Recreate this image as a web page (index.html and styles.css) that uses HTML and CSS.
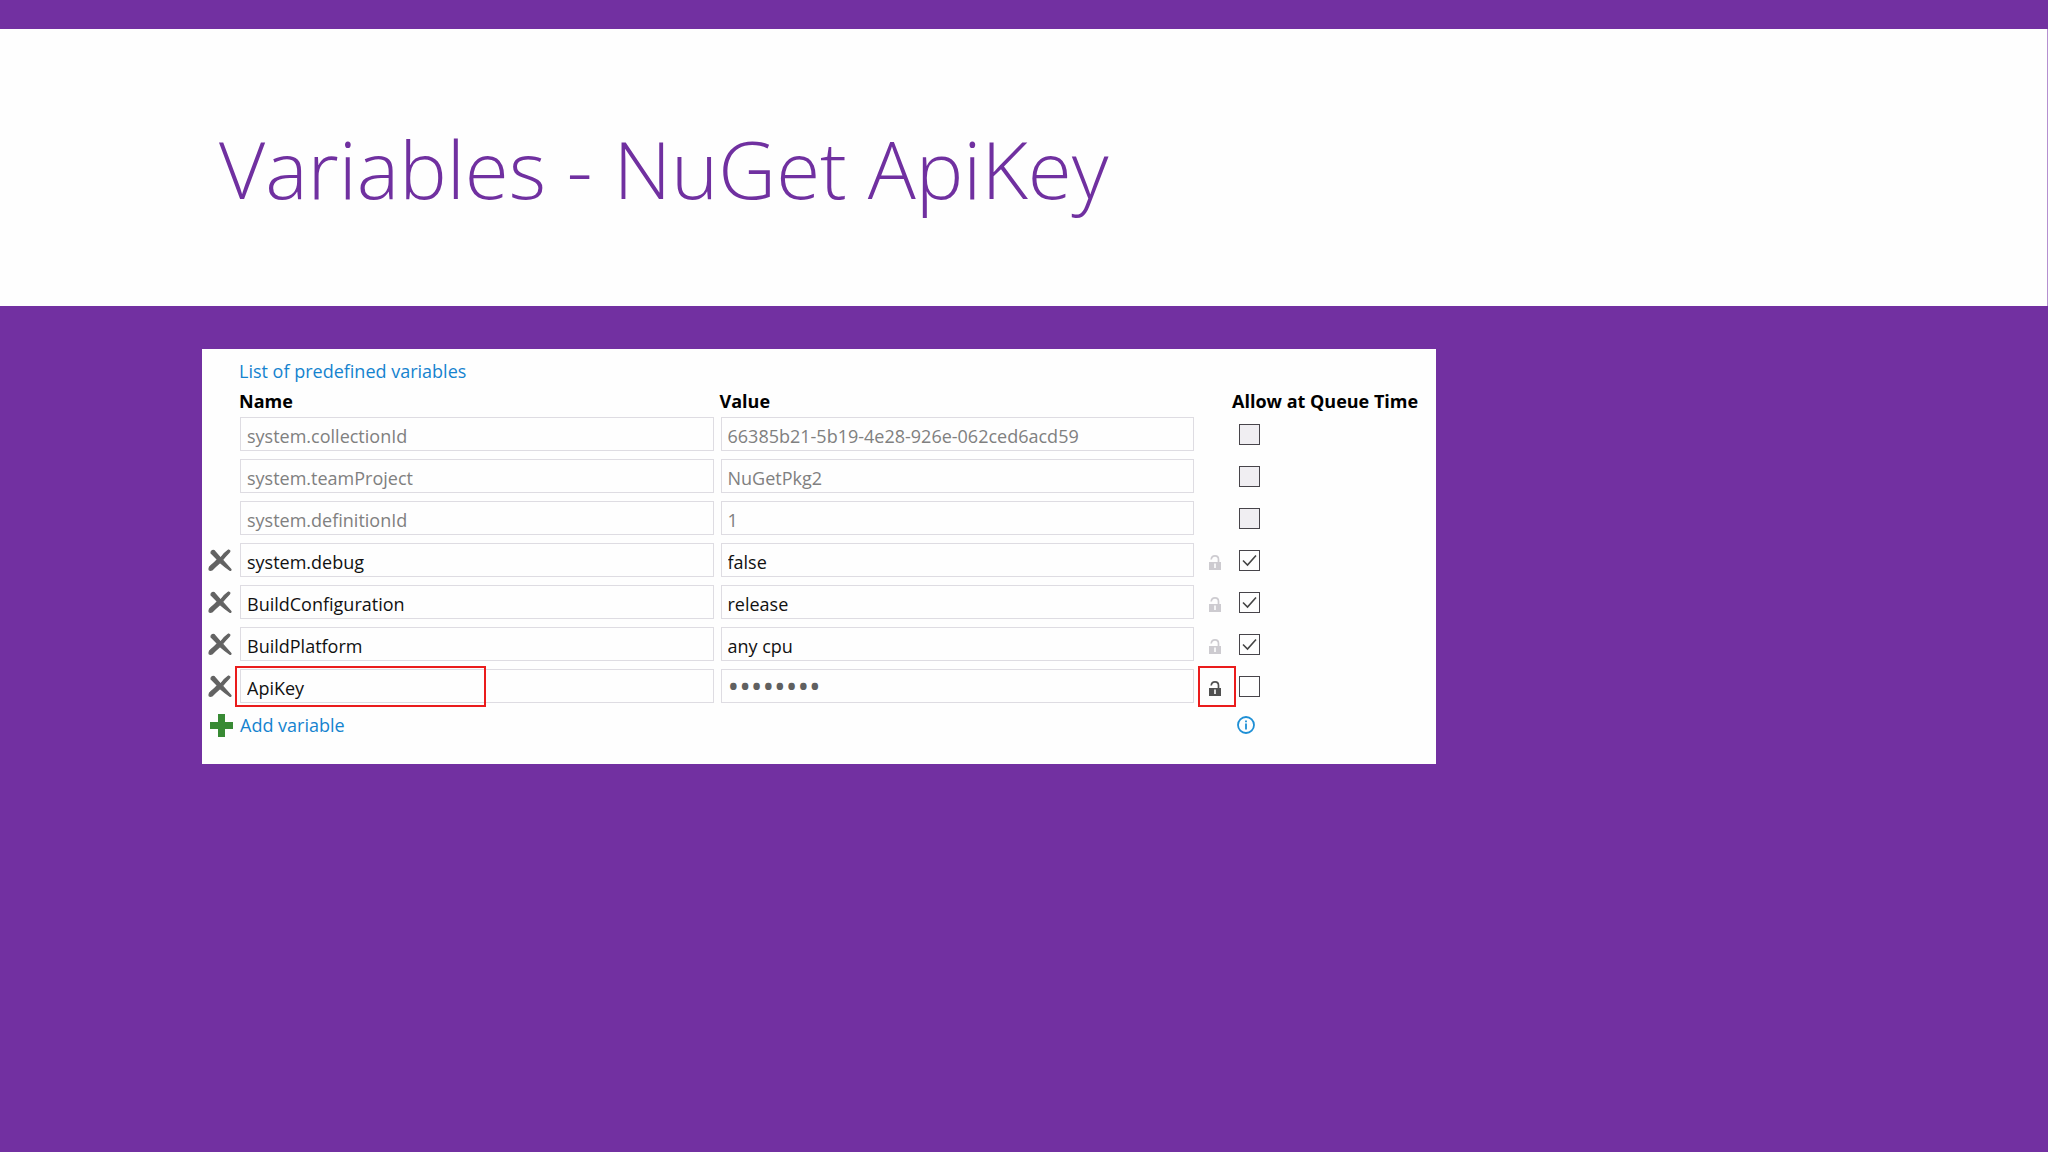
FILE: index.html
```
<!DOCTYPE html>
<html lang="en">
<head>
<meta charset="utf-8">
<meta name="viewport" content="width=device-width, initial-scale=1">
<title>Variables - NuGet ApiKey</title>
<link rel="stylesheet" href="styles.css">
</head>
<body>
<svg class="sprite" aria-hidden="true">
  <symbol id="icon-delete" viewBox="0 0 24 22">
    <path d="M3 4Q3 1 6 1.500Q9 5 12.500 9Q16 4 20.500 1Q23 1.500 21 3.500Q17 7.500 14.500 11Q19 16 23 20.500Q23 22 21.500 21Q16 17 12 13.500Q8 17 4 21Q1 22 1 20Q1 18 3 16.500Q7 13.500 9.500 10.500Q6 7 3 4Z" fill="#636363" stroke="#636363" stroke-width="1.200"/>
  </symbol>
  <symbol id="icon-lock" viewBox="0 0 12 15">
    <path d="M2.200 4.500C2.500 2 4 .9 6 .9S9.500 2.200 9.500 4.500V7" fill="none" stroke="currentColor" stroke-width="1.700"/>
    <path d="M0 7H12V15H0ZM5.200 8.500V13H6.800V8.500Z" fill="currentColor" fill-rule="evenodd"/>
  </symbol>
  <symbol id="icon-plus" viewBox="0 0 23 23">
    <path d="M8 0H15V8H23V15H15V23H8V15H0V8H8Z" fill="#388a34"/>
  </symbol>
  <symbol id="icon-info" viewBox="0 0 18 18">
    <circle cx="9" cy="9" r="8" fill="none" stroke="#1e8fd5" stroke-width="1.800"/>
    <path d="M8.100 4.500H9.900V6.200H8.100ZM8.100 7.500H9.900V13.500H8.100Z" fill="#1e8fd5"/>
  </symbol>
</svg>

<header class="slide-header">
  <h1 class="slide-title">Variables - NuGet ApiKey</h1>
</header>

<main class="panel">
  <p class="predefined"><a class="link" href="#predefined">List of predefined variables</a></p>
  <table class="variables">
    <colgroup><col class="col-delete"><col><col><col class="col-lock"><col class="col-queue"></colgroup>
    <thead>
      <tr><td></td><th scope="col">Name</th><th scope="col">Value</th><td></td><th scope="col">Allow at Queue Time</th></tr>
    </thead>
    <tbody>
      <tr>
        <td></td>
        <td><input class="field" type="text" aria-label="Name" value="system.collectionId" disabled></td>
        <td><input class="field" type="text" aria-label="Value" value="66385b21-5b19-4e28-926e-062ced6acd59" disabled></td>
        <td></td>
        <td><input class="check" type="checkbox" aria-label="Allow system.collectionId at queue time" disabled></td>
      </tr>
      <tr>
        <td></td>
        <td><input class="field" type="text" aria-label="Name" value="system.teamProject" disabled></td>
        <td><input class="field" type="text" aria-label="Value" value="NuGetPkg2" disabled></td>
        <td></td>
        <td><input class="check" type="checkbox" aria-label="Allow system.teamProject at queue time" disabled></td>
      </tr>
      <tr>
        <td></td>
        <td><input class="field" type="text" aria-label="Name" value="system.definitionId" disabled></td>
        <td><input class="field" type="text" aria-label="Value" value="1" disabled></td>
        <td></td>
        <td><input class="check" type="checkbox" aria-label="Allow system.definitionId at queue time" disabled></td>
      </tr>
      <tr>
        <td><button class="icon-button delete" type="button" aria-label="Delete system.debug"><svg><use href="#icon-delete"/></svg></button></td>
        <td><input class="field" type="text" aria-label="Name" value="system.debug"></td>
        <td><input class="field" type="text" aria-label="Value" value="false"></td>
        <td><button class="icon-button lock" type="button" aria-label="Make system.debug secret"><svg><use href="#icon-lock"/></svg></button></td>
        <td><input class="check" type="checkbox" aria-label="Allow system.debug at queue time" checked></td>
      </tr>
      <tr>
        <td><button class="icon-button delete" type="button" aria-label="Delete BuildConfiguration"><svg><use href="#icon-delete"/></svg></button></td>
        <td><input class="field" type="text" aria-label="Name" value="BuildConfiguration"></td>
        <td><input class="field" type="text" aria-label="Value" value="release"></td>
        <td><button class="icon-button lock" type="button" aria-label="Make BuildConfiguration secret"><svg><use href="#icon-lock"/></svg></button></td>
        <td><input class="check" type="checkbox" aria-label="Allow BuildConfiguration at queue time" checked></td>
      </tr>
      <tr>
        <td><button class="icon-button delete" type="button" aria-label="Delete BuildPlatform"><svg><use href="#icon-delete"/></svg></button></td>
        <td><input class="field" type="text" aria-label="Name" value="BuildPlatform"></td>
        <td><input class="field" type="text" aria-label="Value" value="any cpu"></td>
        <td><button class="icon-button lock" type="button" aria-label="Make BuildPlatform secret"><svg><use href="#icon-lock"/></svg></button></td>
        <td><input class="check" type="checkbox" aria-label="Allow BuildPlatform at queue time" checked></td>
      </tr>
      <tr>
        <td><button class="icon-button delete" type="button" aria-label="Delete ApiKey"><svg><use href="#icon-delete"/></svg></button></td>
        <td><input class="field" type="text" aria-label="Name" value="ApiKey"><span class="callout callout-name"></span></td>
        <td><input class="field secret" type="password" aria-label="Value" value="12345678"></td>
        <td><button class="icon-button lock locked" type="button" aria-label="Make ApiKey plain text"><svg><use href="#icon-lock"/></svg></button><span class="callout callout-lock"></span></td>
        <td><input class="check" type="checkbox" aria-label="Allow ApiKey at queue time"></td>
      </tr>
    </tbody>
    <tfoot>
      <tr>
        <td><svg class="plus" aria-hidden="true"><use href="#icon-plus"/></svg></td>
        <td><a class="link" href="#add">Add variable</a></td>
        <td></td>
        <td></td>
        <td><button class="icon-button info" type="button" aria-label="About queue time"><svg><use href="#icon-info"/></svg></button></td>
      </tr>
    </tfoot>
  </table>
</main>
</body>
</html>
```
FILE: styles.css
```
* {
  box-sizing: border-box;
}

body {
  margin: 0;
  min-height: 100vh;
  border-top: 29px solid #7230a1;
  background: #7230a1;
  color: #111;
  font: 18px/24px "Open Sans", "Noto Sans", sans-serif;
}

.sprite {
  display: none;
}

.slide-header {
  padding: 84px 219px;
  border-right: 1px solid #b58fd0;
  background: #fefefe;
}

.slide-title {
  margin: 0;
  color: #7030a0;
  font-size: 80px;
  font-weight: 300;
  line-height: 109px;
}

.panel {
  width: 80%;
  max-width: 1234px;
  margin: 43px 202px;
  padding: 6px 0 21px;
  background: #fefefe;
}

.predefined {
  margin: 0;
  padding-left: 37px;
  line-height: 32px;
}

.link {
  color: #1583cf;
  text-decoration: none;
}

.variables {
  width: 100%;
  border-collapse: collapse;
  table-layout: fixed;
}

.col-delete {
  width: 36px;
}

.col-lock {
  width: 32px;
}

.col-queue {
  width: 205px;
}

th,
td {
  position: relative;
  padding: 0;
  text-align: left;
  vertical-align: middle;
}

th {
  padding: 2px 0 0 1px;
  color: #000;
  font-weight: 700;
}

tbody tr {
  height: 42px;
}

tbody td:nth-child(2),
tbody td:nth-child(3) {
  padding: 0 5px 0 2px;
}

tfoot tr {
  height: 36px;
}

tfoot td:nth-child(2) {
  padding-left: 2px;
}

.field {
  display: block;
  width: 100%;
  height: 34px;
  padding: 4px 6px 0;
  border: 1px solid #dedce2;
  border-radius: 0;
  background: #fefefe;
  color: #111;
  font: inherit;
}

.field:disabled {
  color: #808080;
}

.secret {
  padding-top: 0;
  color: #606060;
  font-size: 31px;
  line-height: 32px;
}

.check {
  display: block;
  width: 21px;
  height: 21px;
  margin: 0 0 0 8px;
  border: 1px solid #47444a;
  appearance: none;
  background: #fefefe;
}

.check:disabled {
  background: #f0eef2;
}

.check:checked {
  background: url("data:image/svg+xml,%3Csvg xmlns='http://www.w3.org/2000/svg' viewBox='0 0 19 19'%3E%3Cpath d='M3 9.500L7.500 14L16 4.500' fill='none' stroke='%23444' stroke-width='1.600'/%3E%3C/svg%3E") center / 19px 19px no-repeat;
}

.icon-button {
  display: block;
  padding: 0;
  border: 0;
  background: none;
}

.icon-button svg {
  display: block;
  width: 100%;
  height: 100%;
}

.delete {
  width: 24px;
  height: 22px;
  margin-left: 6px;
}

.lock {
  width: 12px;
  height: 15px;
  margin: 5px 0 0 10px;
  color: #cdcbd0;
}

.locked {
  color: #505050;
}

.info {
  width: 18px;
  height: 18px;
  margin-left: 6px;
}

.plus {
  display: block;
  width: 23px;
  height: 23px;
  margin-left: 8px;
}

.callout {
  position: absolute;
  top: 1px;
  height: 41px;
  border: 2px solid #ea1c1c;
  pointer-events: none;
}

.callout-name {
  left: -3px;
  width: 251px;
}

.callout-lock {
  left: -1px;
  width: 38px;
}
```
